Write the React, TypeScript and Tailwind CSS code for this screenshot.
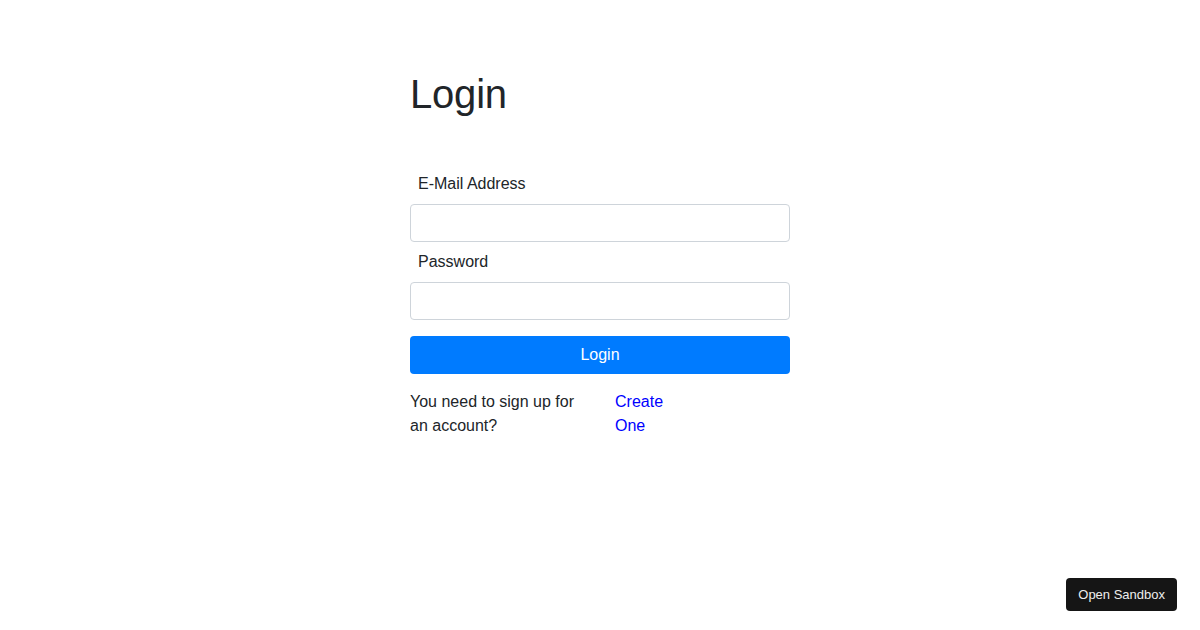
import React from 'react';

const App = () => {
  return (
    <div className="relative min-h-[630px] w-full bg-white text-[#212529] font-['Liberation_Sans',Arial,sans-serif]">
      <div className="mx-auto w-[380px] pt-[70px]">
        <h1 className="text-[40px] leading-[48px] font-normal tracking-[-0.2px]">Login</h1>

        <form className="mt-[54px] flex flex-col" onSubmit={(e) => e.preventDefault()}>
          <label className="pl-2 text-base leading-6">E-Mail Address</label>
          <input
            type="email"
            className="mt-2 h-[38px] w-full rounded border border-[#ced4da] px-3 outline-none"
          />
          <label className="mt-2 pl-2 text-base leading-6">Password</label>
          <input
            type="password"
            className="mt-2 h-[38px] w-full rounded border border-[#ced4da] px-3 outline-none"
          />
          <button
            type="submit"
            className="mt-4 h-[38px] w-full rounded bg-[#007bff] text-base text-white"
          >
            Login
          </button>
        </form>

        <div className="mt-4 flex text-base leading-6">
          <div className="w-[175px]">You need to sign up for an account?</div>
          <a href="#" className="ml-[30px] w-[60px] text-[#0000ff]">
            Create One
          </a>
        </div>
      </div>

      <button className="absolute right-[23px] top-[578px] h-[33px] rounded bg-[#151515] px-3 text-[13px] text-[#eeeeee]">
        Open Sandbox
      </button>
    </div>
  );
};

export default App;
